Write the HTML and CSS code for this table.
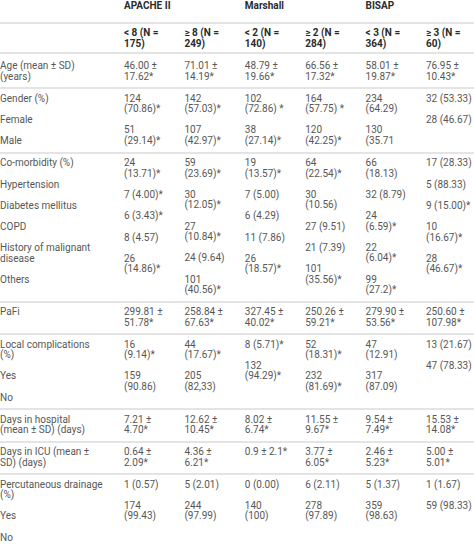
FILE: index.html
```html
<!DOCTYPE html>
<html lang="en">
<head>
<meta charset="utf-8">
<title>Severity scores table</title>
<link rel="stylesheet" href="styles.css">
</head>
<body>
<table class="scores">
  <colgroup>
    <col class="col-label">
    <col class="col-data"><col class="col-data"><col class="col-data">
    <col class="col-data"><col class="col-data"><col class="col-data">
  </colgroup>
  <thead>
    <tr class="group-row">
      <th></th>
      <th colspan="2">APACHE II</th>
      <th colspan="2">Marshall</th>
      <th colspan="2">BISAP</th>
    </tr>
    <tr class="sub-row">
      <th></th>
      <th>&lt; 8 (N =<br>175)</th>
      <th>≥ 8 (N =<br>249)</th>
      <th>&lt; 2 (N =<br>140)</th>
      <th>≥ 2 (N =<br>284)</th>
      <th>&lt; 3 (N =<br>364)</th>
      <th>≥ 3 (N =<br>60)</th>
    </tr>
  </thead>
  <tbody>
    <tr class="first-row">
      <td><p>Age (mean ± SD)<br>(years)</p></td>
      <td><p>46.00 ±<br>17.62*</p></td>
      <td><p>71.01 ±<br>14.19*</p></td>
      <td><p>48.79 ±<br>19.66*</p></td>
      <td><p>66.56 ±<br>17.32*</p></td>
      <td><p>58.01 ±<br>19.87*</p></td>
      <td><p>76.95 ±<br>10.43*</p></td>
    </tr>
    <tr>
      <td><p>Gender (%)</p><p>Female</p><p>Male</p></td>
      <td><p>124<br>(70.86)*</p><p>51<br>(29.14)*</p></td>
      <td><p>142<br>(57.03)*</p><p>107<br>(42.97)*</p></td>
      <td><p>102<br>(72.86) *</p><p>38<br>(27.14)*</p></td>
      <td><p>164<br>(57.75) *</p><p>120<br>(42.25)*</p></td>
      <td><p>234<br>(64.29)</p><p>130<br>(35.71</p></td>
      <td><p>32 (53.33)</p><p>28 (46.67)</p></td>
    </tr>
    <tr>
      <td><p>Co-morbidity (%)</p><p>Hypertension</p><p>Diabetes mellitus</p><p>COPD</p><p>History of malignant<br>disease</p><p>Others</p></td>
      <td><p>24<br>(13.71)*</p><p>7 (4.00)*</p><p>6 (3.43)*</p><p>8 (4.57)</p><p>26<br>(14.86)*</p></td>
      <td><p>59<br>(23.69)*</p><p>30<br>(12.05)*</p><p>27<br>(10.84)*</p><p>24 (9.64)</p><p>101<br>(40.56)*</p></td>
      <td><p>19<br>(13.57)*</p><p>7 (5.00)</p><p>6 (4.29)</p><p>11 (7.86)</p><p>26<br>(18.57)*</p></td>
      <td><p>64<br>(22.54)*</p><p>30<br>(10.56)</p><p>27 (9.51)</p><p>21 (7.39)</p><p>101<br>(35.56)*</p></td>
      <td><p>66<br>(18.13)</p><p>32 (8.79)</p><p>24<br>(6.59)*</p><p>22<br>(6.04)*</p><p>99<br>(27.2)*</p></td>
      <td><p>17 (28.33)</p><p>5 (88.33)</p><p>9 (15.00)*</p><p>10<br>(16.67)*</p><p>28<br>(46.67)*</p></td>
    </tr>
    <tr>
      <td><p>PaFi</p></td>
      <td><p>299.81 ±<br>51.78*</p></td>
      <td><p>258.84 ±<br>67.63*</p></td>
      <td><p>327.45 ±<br>40.02*</p></td>
      <td><p>250.26 ±<br>59.21*</p></td>
      <td><p>279.90 ±<br>53.56*</p></td>
      <td><p>250.60 ±<br>107.98*</p></td>
    </tr>
    <tr>
      <td><p>Local complications<br>(%)</p><p>Yes</p><p>No</p></td>
      <td><p>16<br>(9.14)*</p><p>159<br>(90.86)</p></td>
      <td><p>44<br>(17.67)*</p><p>205<br>(82,33)</p></td>
      <td><p>8 (5.71)*</p><p>132<br>(94.29)*</p></td>
      <td><p>52<br>(18.31)*</p><p>232<br>(81.69)*</p></td>
      <td><p>47<br>(12.91)</p><p>317<br>(87.09)</p></td>
      <td><p>13 (21.67)</p><p>47 (78.33)</p></td>
    </tr>
    <tr>
      <td><p>Days in hospital<br>(mean ± SD) (days)</p></td>
      <td><p>7.21 ±<br>4.70*</p></td>
      <td><p>12.62 ±<br>10.45*</p></td>
      <td><p>8.02 ±<br>6.74*</p></td>
      <td><p>11.55 ±<br>9.67*</p></td>
      <td><p>9.54 ±<br>7.49*</p></td>
      <td><p>15.53 ±<br>14.08*</p></td>
    </tr>
    <tr>
      <td><p>Days in ICU (mean ±<br>SD) (days)</p></td>
      <td><p>0.64 ±<br>2.09*</p></td>
      <td><p>4.36 ±<br>6.21*</p></td>
      <td><p>0.9 ± 2.1*</p></td>
      <td><p>3.77 ±<br>6.05*</p></td>
      <td><p>2.46 ±<br>5.23*</p></td>
      <td><p>5.00 ±<br>5.01*</p></td>
    </tr>
    <tr class="last-row">
      <td><p>Percutaneous drainage<br>(%)</p><p>Yes</p><p>No</p></td>
      <td><p>1 (0.57)</p><p>174<br>(99.43)</p></td>
      <td><p>5 (2.01)</p><p>244<br>(97.99)</p></td>
      <td><p>0 (0.00)</p><p>140<br>(100)</p></td>
      <td><p>6 (2.11)</p><p>278<br>(97.89)</p></td>
      <td><p>5 (1.37)</p><p>359<br>(98.63)</p></td>
      <td><p>1 (1.67)</p><p>59 (98.33)</p></td>
    </tr>
  </tbody>
</table>
</body>
</html>
```
FILE: styles.css
```css
html, body {
  margin: 0;
  padding: 0;
  background: #ffffff;
  overflow: hidden;
}

body {
  font-family: Roboto, "Liberation Sans", Arial, sans-serif;
  font-size: 10px;
  line-height: 10.4px;
  color: #575757;
}

.scores {
  border-collapse: collapse;
  table-layout: fixed;
  width: 486.4px;
  border-spacing: 0;
}

.col-label { width: 124px; }
.col-data { width: 60.4px; }

.scores th,
.scores td {
  text-align: left;
  vertical-align: top;
  white-space: nowrap;
  padding: 4.5px 6px 5.2px 0;
  border-bottom: 2px solid #e4e4e4;
}

.scores th {
  font-weight: 700;
  color: #2b2b2b;
}

.group-row th {
  padding-top: 0.8px;
  padding-bottom: 11.1px;
}

.sub-row th {
  padding-top: 3.8px;
  padding-bottom: 3.4px;
}

.first-row td {
  padding-top: 7.2px;
  padding-bottom: 5px;
}

.last-row td {
  border-bottom: none;
}

.scores p {
  margin: 0;
}

.scores p + p {
  margin-top: 10.85px;
}
```
